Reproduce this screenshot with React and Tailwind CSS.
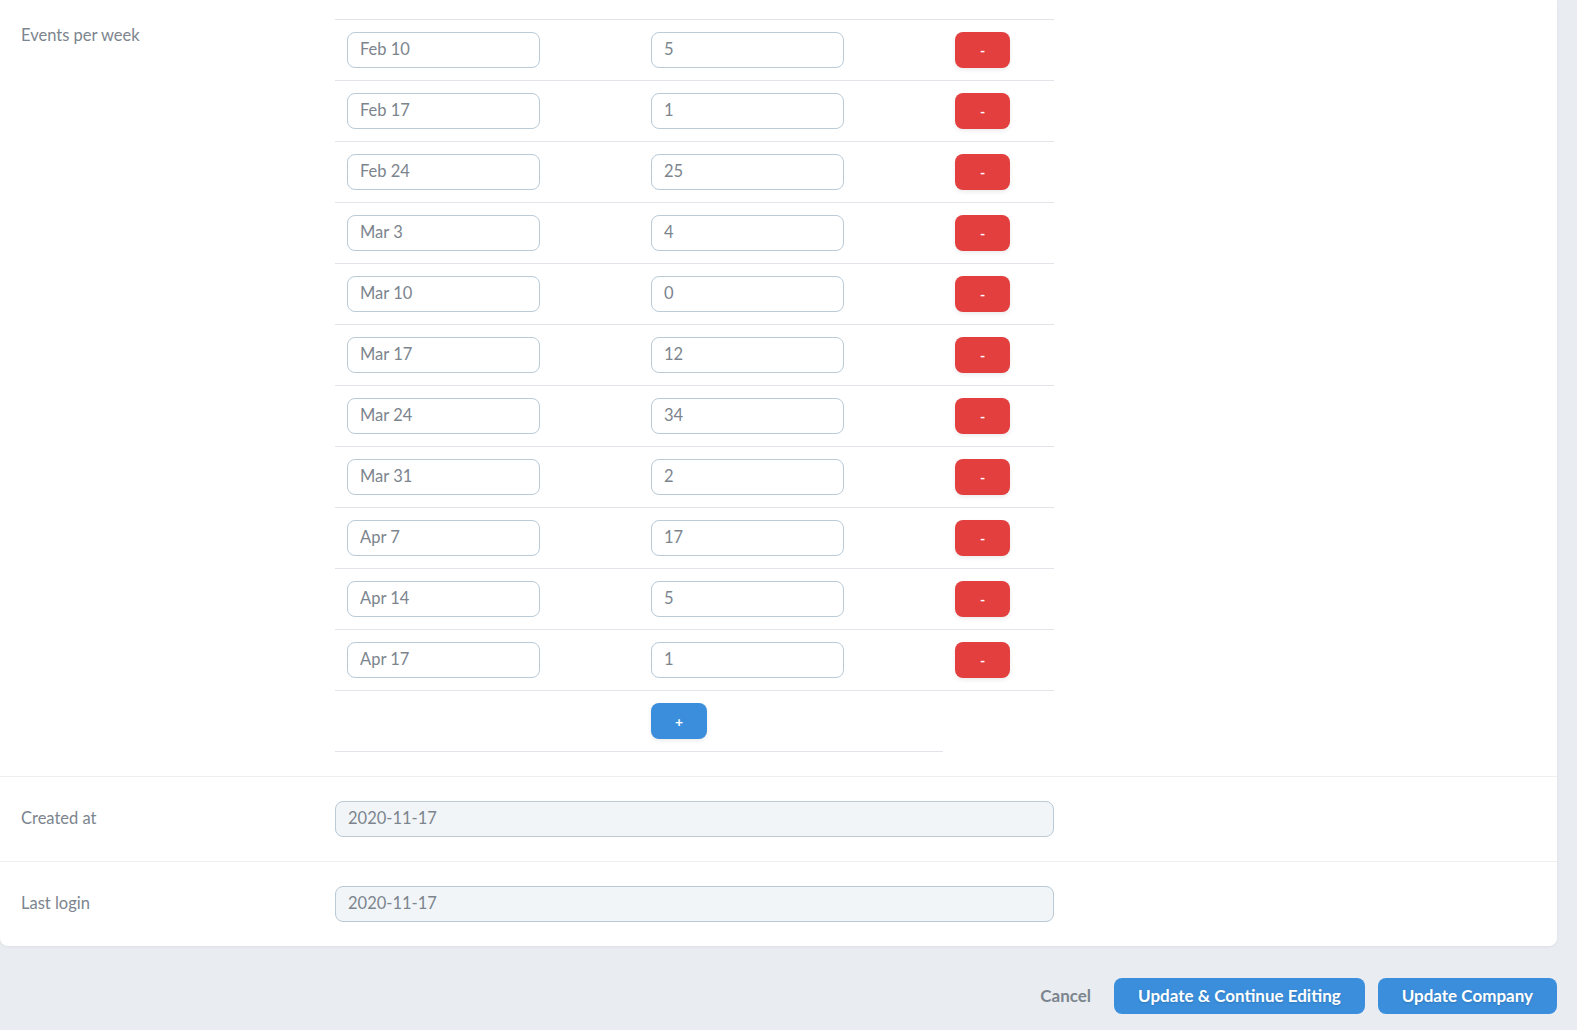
import React from "react";

const rows = [
  ["Feb 10", "5"],
  ["Feb 17", "1"],
  ["Feb 24", "25"],
  ["Mar 3", "4"],
  ["Mar 10", "0"],
  ["Mar 17", "12"],
  ["Mar 24", "34"],
  ["Mar 31", "2"],
  ["Apr 7", "17"],
  ["Apr 14", "5"],
  ["Apr 17", "1"],
];

function Input({ value }) {
  return (
    <div className="w-[193px] h-9 rounded-lg border border-[#bacad6] bg-white px-3 flex items-center text-[16.5px] leading-none pb-[1px] text-[#7c858e]">
      {value}
    </div>
  );
}

export default function App() {
  return (
    <div
      className="min-h-[1030px] w-[1577px] bg-[#e9edf1]"
      style={{ fontFamily: "Lato, 'Noto Sans', sans-serif" }}
    >
      <div className="w-[1557px] bg-white rounded-b-lg shadow-[0_1px_3px_rgba(0,0,0,0.06)]">
        {/* Events per week */}
        <div className="flex pt-[19px] pb-[24px] border-b border-[#edf0f3]">
          <div className="w-[335px] pl-[21px] pt-[4px] text-[16.5px] leading-6 text-[#7c858e]">
            Events per week
          </div>
          <div className="w-[719px] border-t border-[#e1e5e9]">
            {rows.map(([d, v], i) => (
              <div key={i} className="flex h-[61px] items-center border-b border-[#e1e5e9]">
                <div className="w-[304px] px-3">
                  <Input value={d} />
                </div>
                <div className="w-[304px] px-3">
                  <Input value={v} />
                </div>
                <div className="w-[111px] px-3">
                  <button className="w-[55px] h-9 rounded-lg bg-[#e33f3f] text-white font-bold text-[14px] shadow-[0_2px_4px_rgba(0,0,0,0.08)]">
                    -
                  </button>
                </div>
              </div>
            ))}
            <div className="flex w-[608px] h-[61px] items-center border-b border-[#e1e5e9]">
              <div className="w-[304px]" />
              <div className="w-[304px] px-3">
                <button className="w-[56px] h-9 rounded-lg bg-[#3a8edb] text-white font-bold text-[14px] shadow-[0_2px_4px_rgba(0,0,0,0.08)]">
                  +
                </button>
              </div>
            </div>
          </div>
        </div>

        {/* Created at */}
        <div className="flex items-center py-6 border-b border-[#edf0f3]">
          <div className="w-[335px] pl-[21px] text-[16.5px] leading-6 pb-[3px] text-[#7c858e]">
            Created at
          </div>
          <div className="w-[719px] h-9 rounded-lg border border-[#bacad6] bg-[#f1f5f8] px-3 flex items-center text-[16.5px] leading-none pb-[1px] text-[#7c858e]">
            2020-11-17
          </div>
        </div>

        {/* Last login */}
        <div className="flex items-center py-6">
          <div className="w-[335px] pl-[21px] text-[16.5px] leading-6 pb-[3px] text-[#7c858e]">
            Last login
          </div>
          <div className="w-[719px] h-9 rounded-lg border border-[#bacad6] bg-[#f1f5f8] px-3 flex items-center text-[16.5px] leading-none pb-[1px] text-[#7c858e]">
            2020-11-17
          </div>
        </div>
      </div>

      {/* Footer */}
      <div className="w-[1557px] flex items-center justify-end mt-8">
        <button className="text-[17px] font-bold text-[#7c858e] mr-[23px]">Cancel</button>
        <button className="h-9 px-6 rounded-lg bg-[#3a8edb] text-white font-bold text-[17px] mr-[13px] [text-shadow:0_1px_2px_rgba(0,0,0,0.15)]">
          Update &amp; Continue Editing
        </button>
        <button className="h-9 px-6 rounded-lg bg-[#3a8edb] text-white font-bold text-[17px] [text-shadow:0_1px_2px_rgba(0,0,0,0.15)]">
          Update Company
        </button>
      </div>
    </div>
  );
}
